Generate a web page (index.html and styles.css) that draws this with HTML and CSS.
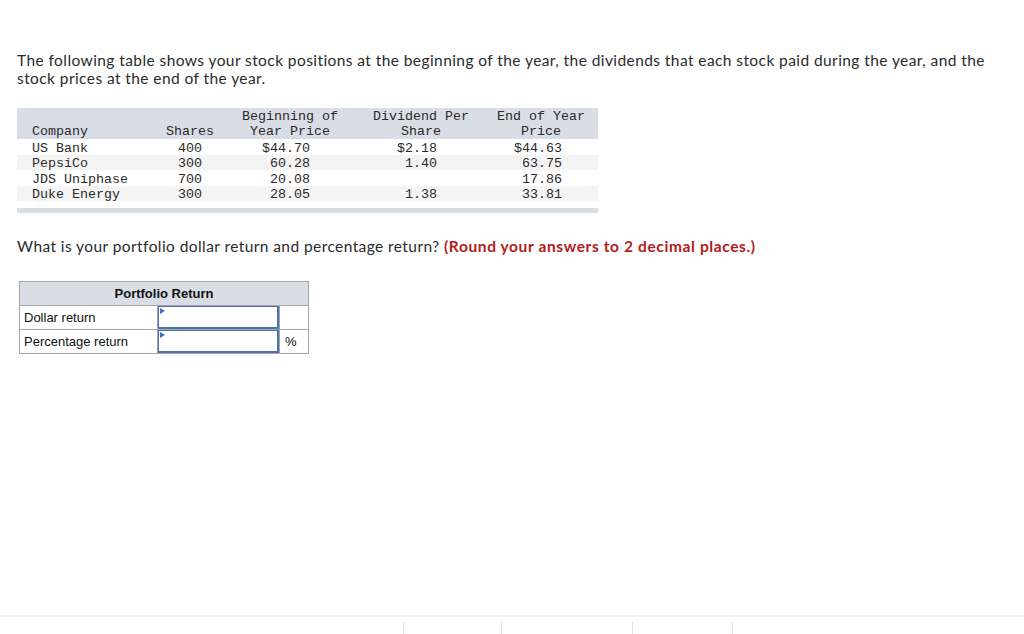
FILE: index.html
```html
<!DOCTYPE html>
<html lang="en">
<head>
<meta charset="utf-8">
<title>Stock positions</title>
<link rel="stylesheet" href="styles.css">
</head>
<body>
<div class="page">
  <main class="content">
    <p class="intro">The following table shows your stock positions at the beginning of the year, the dividends that each stock paid during the year, and the stock prices at the end of the year.</p>

    <div class="stock-wrap">
      <table class="stock">
        <thead>
          <tr>
            <th class="c-company">Company</th>
            <th class="c-shares">Shares</th>
            <th class="c-begin">Beginning of<br>Year Price</th>
            <th class="c-div">Dividend Per<br>Share</th>
            <th class="c-end">End of Year<br>Price</th>
          </tr>
        </thead>
        <tbody>
          <tr>
            <td class="c-company">US Bank</td>
            <td class="c-shares">400</td>
            <td class="c-begin">$44.70</td>
            <td class="c-div">$2.18</td>
            <td class="c-end">$44.63</td>
          </tr>
          <tr class="alt">
            <td class="c-company">PepsiCo</td>
            <td class="c-shares">300</td>
            <td class="c-begin">60.28</td>
            <td class="c-div">1.40</td>
            <td class="c-end">63.75</td>
          </tr>
          <tr>
            <td class="c-company">JDS Uniphase</td>
            <td class="c-shares">700</td>
            <td class="c-begin">20.08</td>
            <td class="c-div"></td>
            <td class="c-end">17.86</td>
          </tr>
          <tr class="alt">
            <td class="c-company">Duke Energy</td>
            <td class="c-shares">300</td>
            <td class="c-begin">28.05</td>
            <td class="c-div">1.38</td>
            <td class="c-end">33.81</td>
          </tr>
        </tbody>
      </table>
      <div class="stock-bar"></div>
    </div>

    <p class="question">What is your portfolio dollar return and percentage return? <strong class="hint">(Round your answers to 2 decimal places.)</strong></p>

    <table class="answer">
      <thead>
        <tr><th colspan="3">Portfolio Return</th></tr>
      </thead>
      <tbody>
        <tr>
          <td class="a-label">Dollar return</td>
          <td class="a-input"><span class="field"><span class="flag"></span></span></td>
          <td class="a-unit"></td>
        </tr>
        <tr>
          <td class="a-label">Percentage return</td>
          <td class="a-input"><span class="field"><span class="flag"></span></span></td>
          <td class="a-unit">%</td>
        </tr>
      </tbody>
    </table>
  </main>

  <footer class="footer">
    <div class="f-cell"></div>
    <div class="f-cell f-div"></div>
    <div class="f-cell f-div"></div>
    <div class="f-cell f-div"></div>
    <div class="f-cell f-div"></div>
  </footer>
</div>
</body>
</html>
```

FILE: styles.css
```css
* { box-sizing: border-box; }

html, body {
  margin: 0;
  padding: 0;
  background: #fff;
}

.page {
  display: flex;
  flex-direction: column;
  height: 634px;
  overflow: hidden;
}

.content {
  flex: 1;
  padding: 51px 17px 0 17px;
}

.intro {
  margin: 0;
  width: 990px;
  font-family: Lato, "Open Sans", sans-serif;
  font-size: 15.5px;
  letter-spacing: 0.42px;
  line-height: 18px;
  color: #2b2b2b;
}

.stock-wrap {
  margin-top: 21px;
  width: 581px;
}

.stock {
  border-collapse: collapse;
  width: 581px;
  table-layout: fixed;
  font-family: "Courier New", "Nimbus Mono PS", FreeMono, "Liberation Mono", monospace;
  font-size: 13.33px;
  color: #2a2a2a;
}

.stock th,
.stock td {
  font-weight: normal;
  white-space: nowrap;
}

.stock td {
  padding: 2.5px 0 0 0;
  line-height: 13px;
}

.stock thead tr {
  background: #d9dde6;
}

.stock th {
  vertical-align: bottom;
  text-align: center;
  padding: 2px 0 0 0;
  line-height: 14.5px;
}

.stock tr.alt {
  background: #f4f4f4;
}

.c-company { width: 133px; text-align: left !important; padding-left: 15px !important; }
.c-shares { width: 80px; }
.c-begin { width: 120px; }
.c-div { width: 142px; }
.c-end { width: 106px; }

.stock th.c-end { padding-right: 8px; }

.stock td.c-shares { text-align: right; padding-right: 28px; }
.stock td.c-begin { text-align: right; padding-right: 40px; }
.stock td.c-div { text-align: right; padding-right: 55px; }
.stock td.c-end { text-align: right; padding-right: 36px; }

.stock-bar {
  margin-top: 7px;
  height: 5px;
  background: #d9dde6;
}

.question {
  margin: 24px 0 0 0;
  font-family: Lato, "Open Sans", sans-serif;
  font-size: 15.5px;
  letter-spacing: 0.42px;
  line-height: 18px;
  color: #2b2b2b;
}

.hint {
  color: #b0201c;
  font-weight: bold;
  letter-spacing: 0.62px;
}

.answer {
  margin: 26px 0 0 2px;
  border-collapse: collapse;
  font-family: "Liberation Sans", Arial, sans-serif;
  font-size: 13px;
  color: #111;
}

.answer th {
  background: #d9dde6;
  border: 1px solid #a6a6a6;
  height: 24px;
  font-weight: bold;
  text-align: center;
  padding: 0;
}

.answer td {
  border: 1px solid #a6a6a6;
  height: 24px;
  padding: 0;
}

.a-label {
  width: 138px;
  padding-left: 4px !important;
}

.a-input {
  width: 122px;
  position: relative;
}

.field {
  display: block;
  height: 23px;
  border: 2px solid #4a72b2;
  border-top-width: 1px;
  border-left-width: 1px;
  background: #fff;
  position: relative;
}

.flag {
  position: absolute;
  left: 1px;
  top: 1px;
  width: 0;
  height: 0;
  border-top: 3.5px solid transparent;
  border-bottom: 3.5px solid transparent;
  border-left: 5px solid #3f6fc0;
}

.a-unit {
  width: 29px;
  padding-left: 5px !important;
}

.footer {
  height: 19px;
  border-top: 2px solid #f3f3f3;
  display: grid;
  grid-template-columns: 403px 98px 131px 100px 1fr;
  padding-top: 4px;
}

.f-div {
  border-left: 1px solid #e2e2e2;
}
```
